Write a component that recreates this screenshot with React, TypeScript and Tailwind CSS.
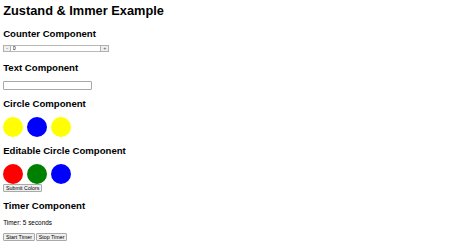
import React from "react";

const heading = "text-[9.6px] font-bold leading-[11px]";
const btn =
  "h-[8px] px-[1.8px] bg-[#efefef] border border-[#a9a9a9] rounded-[1px] text-[5.33px] leading-none text-black whitespace-nowrap";

export default function App() {
  const circles = ["#ffff00", "#0000ff", "#ffff00"];
  const editable = ["#ff0000", "#008000", "#0000ff"];

  return (
    <div className="flex flex-col items-start pl-[3.2px] font-['Liberation_Sans',Arial,sans-serif] text-black bg-white min-h-[248px]">
      <h1 className="mt-[4.3px] text-[12.8px] font-bold leading-[14.7px]">Zustand &amp; Immer Example</h1>

      {/* Counter */}
      <h2 className={`mt-[8.5px] ${heading}`}>Counter Component</h2>
      <div className="mt-[6.2px] flex h-[7.5px]">
        <button className="w-[8px] h-full bg-[#efefef] border border-[#b0b0b0] text-[5.33px] leading-none text-[#555]">-</button>
        <input
          readOnly
          value="0"
          className="w-[89px] h-full border border-[#b8b8b8] border-x-0 bg-white px-[1.5px] text-[5.33px] leading-none outline-none"
        />
        <button className="w-[9px] h-full bg-[#efefef] border border-[#b0b0b0] text-[5.33px] leading-none text-[#555]">+</button>
      </div>

      {/* Text */}
      <h2 className={`mt-[10px] ${heading}`}>Text Component</h2>
      <input
        readOnly
        className="mt-[8.1px] w-[89px] h-[8.7px] border border-[#a8a8a8] rounded-[1px] bg-white outline-none"
      />

      {/* Circles */}
      <h2 className={`mt-[8.5px] ${heading}`}>Circle Component</h2>
      <div className="mt-[7.5px] flex gap-[4px]">
        {circles.map((c, i) => (
          <div key={i} className="w-5 h-5 rounded-full" style={{ backgroundColor: c }} />
        ))}
      </div>

      {/* Editable circles */}
      <h2 className={`mt-[8.2px] ${heading}`}>Editable Circle Component</h2>
      <div className="mt-[7.5px] flex gap-[4px]">
        {editable.map((c, i) => (
          <div key={i} className="w-5 h-5 rounded-full" style={{ backgroundColor: c }} />
        ))}
      </div>
      <button className={`mt-[0.6px] ${btn}`}>Submit Colors</button>

      {/* Timer */}
      <h2 className={`mt-[7.9px] ${heading}`}>Timer Component</h2>
      <p className="mt-[8.3px] text-[6.4px] leading-[7.4px]">Timer: 5 seconds</p>
      <div className="mt-[6.4px] flex gap-[1px]">
        <button className={btn}>Start Timer</button>
        <button className={btn}>Stop Timer</button>
      </div>
    </div>
  );
}
